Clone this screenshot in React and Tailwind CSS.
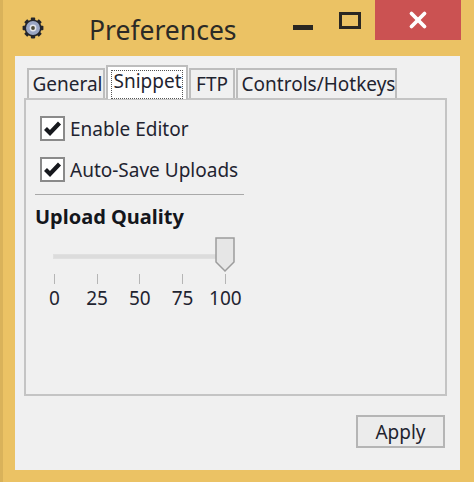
import React from 'react';
import { X } from 'lucide-react';

const font = { fontFamily: '"Noto Sans", "Open Sans", sans-serif' };

const GearIcon = () => (
  <svg width="22" height="22" viewBox="0 0 22 22">
    <g fill="#23252b">
      <circle cx="11" cy="11" r="8.6" />
      {[0, 45, 90, 135, 180, 225, 270, 315].map((a) => (
        <rect key={a} x="8.8" y="0.6" width="4.4" height="4.4" rx="0.8" transform={`rotate(${a} 11 11)`} />
      ))}
    </g>
    <circle cx="11" cy="11" r="7" fill="#9aa6c4" />
    <circle cx="11" cy="11" r="3.4" fill="#e4e6ec" />
    <circle cx="11" cy="11" r="1.9" fill="#4c4a38" />
  </svg>
);

const Tab = ({ label, width, active, shift }) => (
  <div
    className={
      active
        ? 'relative z-10 -mb-px flex h-[34px] items-center justify-center border-2 border-b-0 border-[#bdbdbd] bg-white pb-1'
        : 'flex h-[30px] items-center justify-center border-2 border-b-0 border-[#bdbdbd] bg-[#f0f0f0]'
    }
    style={{ width, paddingLeft: shift }}
  >
    <span className="text-[19px] leading-6 text-[#1f2430]">{label}</span>
    {active && <div className="absolute inset-x-[3px] bottom-0 top-[3px] border border-dotted border-[#555]" />}
  </div>
);

const CheckRow = ({ label }) => (
  <div className="flex items-center gap-[5px]">
    <div className="flex h-[25px] w-[25px] items-center justify-center border-2 border-[#8a8a8a] bg-white">
      <svg width="19" height="17" viewBox="0 0 19 17">
        <path d="M2.5 8.5 L7 13 L16.5 3" fill="none" stroke="#16181d" strokeWidth="4.2" />
      </svg>
    </div>
    <span className="text-[19px] leading-6 text-[#1f2430]">{label}</span>
  </div>
);

const ticks = ['0', '25', '50', '75', '100'];

export default function App() {
  return (
    <div className="flex h-[482px] w-[474px] flex-col overflow-hidden border-l-[3px] border-[#d9b25a] bg-[#ebc264]" style={font}>
      {/* Title bar */}
      <div className="flex h-[56px] shrink-0">
        <div className="ml-[19px] mt-[17px]">
          <GearIcon />
        </div>
        <h1 className="ml-[45px] mt-[10px] text-[26.5px] leading-10 font-normal text-[#2b2a26]">Preferences</h1>
        <div className="ml-auto mr-[13px] flex">
          <div className="mr-[26px] mt-[25px] h-[5px] w-[20px] bg-[#2a2722]" />
          <div className="mr-[14px] mt-[12px] h-[17px] w-[22px] border-[3px] border-[#2a2722]" />
          <div className="flex h-[40px] w-[86px] items-center justify-center bg-[#cb5252]">
            <X size={26} strokeWidth={3.5} className="text-white" />
          </div>
        </div>
      </div>

      {/* Window body */}
      <div className="ml-[12px] h-[414px] w-[445px] bg-[#f0f0f0] pl-[9px] pt-[9px]">
        <div className="flex h-[33px] items-end gap-px pl-[3px]">
          <Tab label="General" width={78} shift={3} />
          <Tab label="Snippet" width={82} shift={1} active />
          <Tab label="FTP" width={46} />
          <Tab label="Controls/Hotkeys" width={161} shift={4} />
        </div>

        <div className="h-[298px] w-[423px] border-2 border-[#c4c4c4] bg-[#f0f0f0] pl-[9px] pt-[16px]">
          <div className="flex flex-col gap-[16px] pl-[5px]">
            <CheckRow label="Enable Editor" />
            <CheckRow label="Auto-Save Uploads" />
          </div>
          <div className="mt-[12px] h-px w-[209px] bg-[#a9a9a9]" />
          <div className="mt-[10px] text-[20px] leading-6 font-bold text-[#14161c]">Upload Quality</div>

          {/* Slider */}
          <div className="relative ml-[18px] mt-[25px] h-[5px] w-[170px] border border-[#e0e0e0] bg-[#dcdcdc]">
            <svg className="absolute -top-[18px] left-[161px]" width="20" height="36" viewBox="0 0 20 36">
              <path d="M1 1 H19 V25 L10 34 L1 25 Z" fill="#e6e6e6" stroke="#9c9c9c" strokeWidth="1.5" />
            </svg>
          </div>
          <div className="-ml-[2px] mt-[15px] flex text-[19px] leading-6 text-[#1f2430]">
            {ticks.map((t) => (
              <div key={t} className="flex w-[42.75px] flex-col items-center">
                <div className="mb-[2px] h-[10px] w-px bg-[#b5b5b5]" />
                <span>{t}</span>
              </div>
            ))}
          </div>
        </div>

        <div className="mt-[19px] flex justify-end pr-[15px]">
          <button className="flex h-[33px] w-[89px] items-center justify-center border-2 border-[#b5b5b5] bg-[#ececec] text-[19px] leading-6 text-[#1f2430]">
            Apply
          </button>
        </div>
      </div>
    </div>
  );
}
